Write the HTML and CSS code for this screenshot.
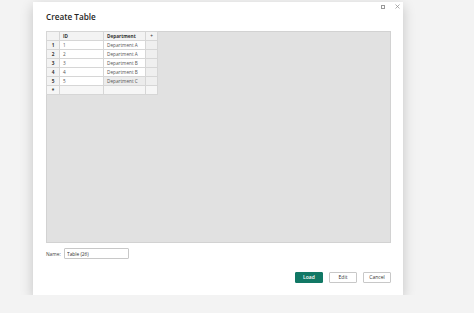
FILE: index.html
```html
<!DOCTYPE html>
<html>
    <head>
        <title>Create Table</title>
        <meta http-equiv="Content-Type" content="text/html;charset=utf-8"/>
        <link rel="stylesheet" href="styles.css">
    </head>
    <body>
        <div class="dialog">
            <div class="topbar">
                <span class="ctl max"></span>
                <span class="ctl close">
                    <svg width="5" height="5" viewBox="0 0 5 5"><path d="M0.5 0.5L4.5 4.5M4.5 0.5L0.5 4.5" stroke="#8a8a8a" stroke-width="0.7" fill="none"/></svg>
                </span>
            </div>
            <div class="title">Create Table</div>
            <div class="grid">
                <table>
                    <tr class="head">
                        <td class="rh"></td>
                        <td class="c-id">ID</td>
                        <td class="c-dep">Department</td>
                        <td class="c-add">+</td>
                    </tr>
                    <tr><td class="rh">1</td><td>1</td><td>Department A</td><td class="c-add"></td></tr>
                    <tr><td class="rh">2</td><td>2</td><td>Department A</td><td class="c-add"></td></tr>
                    <tr><td class="rh">3</td><td>3</td><td>Department B</td><td class="c-add"></td></tr>
                    <tr><td class="rh">4</td><td>4</td><td>Department B</td><td class="c-add"></td></tr>
                    <tr><td class="rh">5</td><td>5</td><td class="sel">Department C</td><td class="c-add"></td></tr>
                    <tr class="new"><td class="rh">*</td><td></td><td></td><td class="c-add"></td></tr>
                </table>
            </div>
            <div class="name-row">
                <span class="lbl">Name:</span>
                <input id="table_name" type="text" value="Table (26)"/>
            </div>
            <div class="buttons">
                <button class="btn primary">Load</button>
                <button class="btn">Edit</button>
                <button class="btn">Cancel</button>
            </div>
        </div>
    </body>
</html>
```
FILE: styles.css
```css
* { box-sizing: border-box; }

body {
    background: #f3f3f3;
    font-family: "Open Sans", "Noto Sans", sans-serif;
    margin: 0px;
    overflow: hidden;
    padding: 2px 0px 0px 33px;
}

.dialog {
    background: #fff;
    box-shadow: 0px 4px 12px rgba(0, 0, 0, 0.2);
    display: flex;
    flex-direction: column;
    height: 293px;
    padding: 0px 12px 0px 13px;
    width: 370px;
}

.topbar {
    align-items: center;
    display: flex;
    gap: 10px;
    height: 9px;
    justify-content: flex-end;
    margin-right: -9px;
}

.ctl {
    display: block;
    height: 5px;
    width: 5px;
}

.ctl.max { border: 0.7px solid #999; height: 4px; width: 4px; }

.ctl.close svg { display: block; }

.title {
    color: #252423;
    font-size: 8.2px;
    font-weight: 600;
    height: 13px;
    line-height: 12px;
}

.grid {
    background: #e1e1e1;
    border: 1px solid #d2d2d2;
    height: 212px;
    margin-top: 7px;
    width: 345px;
}

.grid table {
    border-collapse: collapse;
    font-size: 4.7px;
    margin: -1px 0px 0px -1px;
}

.grid td {
    background: #fff;
    border: 1px solid #d6d6d6;
    color: #555;
    height: 9px;
    line-height: 7px;
    padding: 0px 0px 0px 3px;
    white-space: nowrap;
}

.grid td.rh {
    background: #f3f3f3;
    color: #333;
    font-weight: 700;
    padding: 0px;
    text-align: center;
    width: 13px;
}

.grid td.c-id { width: 44px; }
.grid td.c-dep { width: 42px; }

.grid td.c-add {
    background: #efefef;
    padding: 0px;
    text-align: center;
    width: 12px;
}

.grid tr.head td {
    background: #f3f3f3;
    color: #333;
    font-weight: 700;
}

.grid tr.head td.c-add { font-weight: 400; }

.grid td.sel { background: #ececec; }

.grid tr.new td { background: #f6f6f6; }

.name-row {
    align-items: center;
    display: flex;
    height: 11px;
    margin-top: 5px;
}

.lbl {
    color: #444;
    font-size: 4.8px;
    width: 18px;
}

#table_name {
    border: 1px solid #c8c8c8;
    border-radius: 1px;
    color: #333;
    font-family: "Open Sans", "Noto Sans", sans-serif;
    font-size: 4.8px;
    height: 11px;
    margin: 0px;
    padding: 0px 2px;
    width: 65px;
}

.buttons {
    display: flex;
    gap: 6px;
    justify-content: flex-end;
    margin: 13px 0px 0px 0px;
}

.btn {
    background: #fff;
    border: 1px solid #c8c8c8;
    border-radius: 1px;
    color: #333;
    font-family: "Open Sans", "Noto Sans", sans-serif;
    font-size: 5px;
    height: 11px;
    line-height: 9px;
    padding: 0px;
    width: 28px;
}

.btn.primary {
    background: #117865;
    border-color: #117865;
    color: #fff;
    font-weight: 600;
}
```
